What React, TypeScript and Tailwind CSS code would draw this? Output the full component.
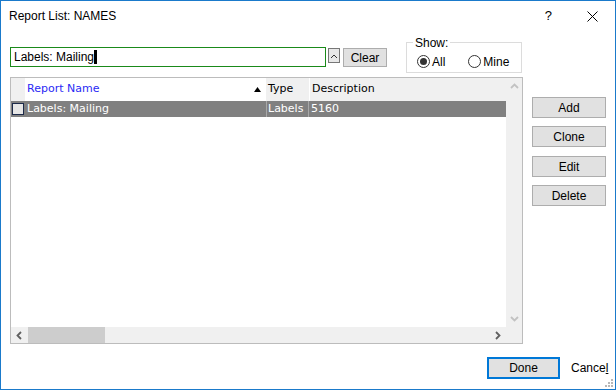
import React from 'react'

const ui = { fontFamily: '"Liberation Sans", Arial, sans-serif' }
const list = { fontFamily: '"DejaVu Sans", Verdana, sans-serif' }

function Chevron({ dir, color }: { dir: 'up' | 'down' | 'left' | 'right'; color: string }) {
  const d = {
    up: 'M1 6 L4.5 2.5 L8 6',
    down: 'M1 3 L4.5 6.5 L8 3',
    left: 'M6 1 L2.5 4.5 L6 8',
    right: 'M3 1 L6.5 4.5 L3 8',
  }[dir]
  return (
    <svg width="9" height="9" viewBox="0 0 9 9">
      <path d={d} fill="none" stroke={color} strokeWidth="1.8" />
    </svg>
  )
}

function Radio({ checked, label }: { checked?: boolean; label: string }) {
  return (
    <div className="flex items-center gap-[2px]">
      <div className="w-[13px] h-[13px] rounded-full border border-[#333] bg-white flex items-center justify-center">
        {checked && <div className="w-[7px] h-[7px] rounded-full bg-[#333]" />}
      </div>
      <span className="text-[12px] text-black leading-none">{label}</span>
    </div>
  )
}

function SideButton({ label, className = '' }: { label: string; className?: string }) {
  return (
    <button className={`w-[74px] h-[21px] bg-[#e1e1e1] border border-[#adadad] text-[12px] text-black leading-none ${className}`}>
      {label}
    </button>
  )
}

export default function App() {
  return (
    <div style={ui} className="w-[616px] h-[390px] bg-white border border-[#1a7acb] flex flex-col overflow-hidden">
      {/* title bar */}
      <div className="h-[30px] flex items-center shrink-0">
        <span className="ml-[8px] text-[12px] text-black">Report List: NAMES</span>
        <span className="ml-auto text-[13px] text-black">?</span>
        <svg className="ml-[35px] mr-[17px]" width="11" height="11" viewBox="0 0 11 11">
          <path d="M0.5 0.5 L10.5 10.5 M10.5 0.5 L0.5 10.5" stroke="#000" strokeWidth="1" />
        </svg>
      </div>

      <div className="pl-[9px] pt-[6px] flex flex-col">
        {/* search row */}
        <div className="h-[35px] flex items-start">
          <div className="mt-[10px] w-[316px] h-[20px] border border-[#1a8a1a] flex items-center pl-[3px]">
            <span className="text-[12px] text-black leading-none">Labels: Mailing</span>
            <span className="w-[3px] h-[14px] bg-black" />
          </div>
          <div className="mt-[11px] ml-[2px] w-[12px] h-[15px] border border-[#777] bg-[#e8e8e8] flex items-center justify-center">
            <svg width="8" height="6" viewBox="0 0 8 6">
              <path d="M1 5 L4 2 L7 5" fill="none" stroke="#333" strokeWidth="1" />
            </svg>
          </div>
          <button className="mt-[11px] ml-[3px] w-[44px] h-[19px] bg-[#e1e1e1] border border-[#adadad] text-[12px] text-black leading-none">
            Clear
          </button>
          <div className="relative mt-[5px] ml-[19px] w-[116px] h-[31px] border border-[#dcdcdc] flex items-center pt-[8px] pl-[10px] gap-[23px]">
            <span className="absolute -top-[6px] left-[6px] px-[2px] bg-white text-[12px] leading-none text-black">Show:</span>
            <Radio checked label="All" />
            <Radio label="Mine" />
          </div>
        </div>

        {/* list + side buttons */}
        <div className="mt-[5px] flex items-start">
          <div style={list} className="w-[513px] h-[267px] border border-[#bcbcbc] flex text-[11px]">
            <div className="flex-1 flex flex-col">
              <div className="flex-1 flex flex-col">
                <div className="h-[23px] flex bg-[#f0f0f0]">
                  <div className="w-[14px]" />
                  <div className="w-[241px] bg-white flex items-center pl-[2px] text-[#2a2af5]">
                    <span>Report Name</span>
                    <svg className="ml-auto mr-[5px]" width="7" height="5" viewBox="0 0 7 5">
                      <path d="M0 5 L3.5 0 L7 5 Z" fill="#000" />
                    </svg>
                  </div>
                  <div className="w-[42px] ml-[1px] flex items-center pl-[1px] text-black">Type</div>
                  <div className="flex-1 border-l border-white flex items-center pl-[2px] text-black">Description</div>
                </div>
                <div className="h-[16px] flex bg-[#808080] text-white">
                  <div className="w-[14px] flex items-center pl-[1px]">
                    <div className="w-[12px] h-[12px] border border-[#1c2a4a] bg-[#e6e6e6]" />
                  </div>
                  <div className="w-[241px] flex items-center pl-[2px]">Labels: Mailing</div>
                  <div className="w-[42px] border-l border-[#a8a8a8] flex items-center pl-[1px]">Labels</div>
                  <div className="flex-1 border-l border-[#a8a8a8] flex items-center pl-[2px]">5160</div>
                </div>
              </div>
              <div className="h-[16px] bg-[#f0f0f0] flex items-center">
                <div className="w-[17px] flex justify-center">
                  <Chevron dir="left" color="#606060" />
                </div>
                <div className="w-[77px] h-full bg-[#cdcdcd]" />
                <div className="ml-auto w-[17px] flex justify-center">
                  <Chevron dir="right" color="#606060" />
                </div>
              </div>
            </div>
            <div className="w-[16px] bg-[#f0f0f0] flex flex-col items-center">
              <div className="h-[17px] flex items-center">
                <Chevron dir="up" color="#c2c2c2" />
              </div>
              <div className="flex-1" />
              <div className="h-[17px] mb-[16px] flex items-center">
                <Chevron dir="down" color="#c2c2c2" />
              </div>
            </div>
          </div>

          <div className="ml-[9px] mt-[20px] flex flex-col">
            <SideButton label="Add" />
            <SideButton label="Clone" className="mt-[8px]" />
            <SideButton label="Edit" className="mt-[9px]" />
            <SideButton label="Delete" className="mt-[8px]" />
          </div>
        </div>

        {/* bottom buttons */}
        <div className="mt-[13px] flex items-center">
          <button className="ml-[477px] w-[73px] h-[22px] bg-[#e1e1e1] border-2 border-[#0078d7] text-[12px] text-black leading-none">
            Done
          </button>
          <span className="ml-[11px] text-[12px] text-black">
            Cance<span className="underline">l</span>
          </span>
        </div>
      </div>

      {/* size grip */}
      <div className="mt-auto self-end mr-[2px] mb-[3px] grid grid-cols-3 gap-[1px] w-[8px]">
        <span />
        <span />
        <span className="w-[2px] h-[2px] bg-[#b8b8b8]" />
        <span />
        <span className="w-[2px] h-[2px] bg-[#b8b8b8]" />
        <span className="w-[2px] h-[2px] bg-[#b8b8b8]" />
        <span className="w-[2px] h-[2px] bg-[#b8b8b8]" />
        <span className="w-[2px] h-[2px] bg-[#b8b8b8]" />
        <span className="w-[2px] h-[2px] bg-[#b8b8b8]" />
      </div>
    </div>
  )
}
